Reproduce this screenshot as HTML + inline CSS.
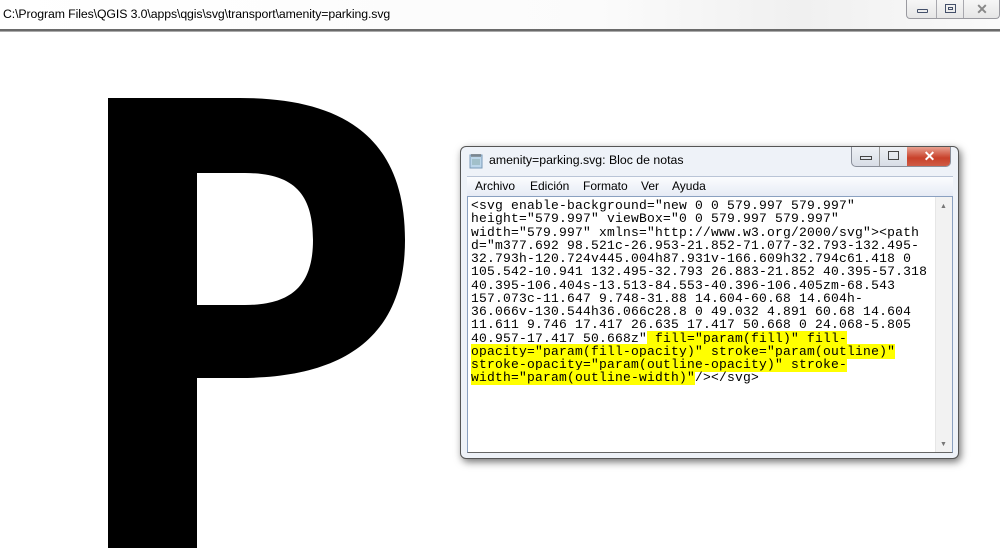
<!DOCTYPE html>
<html><head><meta charset="utf-8">
<style>
*{margin:0;padding:0;box-sizing:border-box}
html,body{width:1000px;height:560px;overflow:hidden;background:#fff;font-family:"Liberation Sans",sans-serif}
.tb{position:absolute;left:0;top:0;width:1000px;height:29px;background:linear-gradient(90deg,#fff 0%,#fbfbfb 60%,#f0f0f0 80%,#fafafa 100%);}
.tb .t{position:absolute;left:3px;top:7px;font-size:12.3px;color:#000;letter-spacing:-0.1px}
.line{position:absolute;left:0;top:29px;width:1000px;height:3px;background:#6a6a6a;border-bottom:1px solid #aaa}
.btns{position:absolute;left:906px;top:0;width:94px;height:19px;border:1px solid #9a9aa0;border-top:none;border-radius:0 0 4px 4px;background:linear-gradient(#f6f6f6,#e6e6e6)}
.btns div{position:absolute;top:0;height:18px;border-right:1px solid #a8a8ae}
.np{position:absolute;left:460px;top:146px;width:499px;height:313px;border:1px solid #555;border-radius:6px;background:#eef2f8;box-shadow:2px 3px 8px rgba(0,0,0,.55)}
.np .tt{position:absolute;left:28px;top:6px;font-size:12.3px;color:#000}
.menu{position:absolute;left:6px;top:29px;width:486px;height:20px;background:linear-gradient(#fbfcfe,#e6ebf5);border-top:1px solid #b9c4d6;font-size:12px}
.menu span{position:absolute;top:2px}
.ta{position:absolute;left:6px;top:49px;width:486px;height:257px;background:#fff;border:1px solid #8aa0c0;border-bottom-color:#666}
.sb{position:absolute;right:0;top:0;width:17px;height:100%;background:#f2f2f2;border-left:1px solid #e6e6e6}
pre{position:absolute;left:3px;top:2px;font-family:"Liberation Mono",monospace;font-size:13px;line-height:13.25px;color:#000;letter-spacing:0.2px}
.h{background:#ffff00}
.nb{position:absolute;left:390px;top:0;width:100px;height:20px}
</style></head><body>
<div class="tb"><div class="t">C:\Program Files\QGIS 3.0\apps\qgis\svg\transport\amenity=parking.svg</div></div>
<div class="line"></div>
<div class="btns">
 <div style="left:0;width:30px"><span style="position:absolute;left:10px;top:9px;width:11px;height:4px;border:1px solid #44506a;border-radius:1px"></span></div>
 <div style="left:30px;width:27px"><span style="position:absolute;left:8px;top:4px;width:11px;height:9px;border:1px solid #44506a"></span><span style="position:absolute;left:11px;top:7px;width:5px;height:3px;border:1px solid #44506a"></span></div>
 <div style="left:57px;width:36px;border:none;text-align:center;font-size:14px;font-weight:bold;color:#888;line-height:18px">✕</div>
</div>
<svg style="position:absolute;left:0;top:0" width="1000" height="560">
<path fill-rule="evenodd" fill="#000" d="M108 98 H240 C340 98 405 135 405 240 C405 340 340 378 240 378 H197 V548 H108 Z M197 173 H245 C295 173 313 195 313 240 C313 285 292 305 245 305 H197 Z"/>
</svg>
<div class="np">
 <svg style="position:absolute;left:8px;top:6px" width="14" height="16"><rect x="1" y="2" width="12" height="13" fill="#bcd6ea" stroke="#7a9ab8"/><path d="M3 1v3M5 1v3M7 1v3M9 1v3M11 1v3" stroke="#555"/><path d="M3 7h8M3 9h8M3 11h8" stroke="#8aa"/></svg>
 <div class="tt">amenity=parking.svg: Bloc de notas</div>
 <div class="nb">
  <div style="position:absolute;left:0;top:0;width:100px;height:20px;border:1px solid #8a8f9a;border-top:none;border-radius:0 0 5px 5px;background:linear-gradient(#eef1f5,#d8dde6);overflow:hidden">
   <div style="position:absolute;left:0;top:0;width:28px;height:20px;border-right:1px solid #999"><span style="position:absolute;left:8px;top:9px;width:12px;height:4px;border:1px solid #444"></span></div>
   <div style="position:absolute;left:28px;top:0;width:27px;height:20px"><span style="position:absolute;left:8px;top:4px;width:11px;height:9px;border:1px solid #444"></span></div>
   <div style="position:absolute;left:55px;top:0;width:45px;height:20px;background:linear-gradient(#e8a090,#c8412a 55%,#d0604a);color:#fff;text-align:center;font-weight:bold;font-size:14px;line-height:19px">✕</div>
  </div>
 </div>
 <div class="menu">
  <span style="left:8px">Archivo</span><span style="left:63px">Edición</span><span style="left:116px">Formato</span><span style="left:174px">Ver</span><span style="left:205px">Ayuda</span>
 </div>
 <div class="ta">
  <div class="sb"><span style="position:absolute;left:4px;top:6px;font-size:7px;color:#777">▲</span><span style="position:absolute;left:4px;bottom:4px;font-size:7px;color:#777">▼</span></div>
<pre>&lt;svg enable-background="new 0 0 579.997 579.997"
height="579.997" viewBox="0 0 579.997 579.997"
width="579.997" xmlns="http://www.w3.org/2000/svg"&gt;&lt;path
d="m377.692 98.521c-26.953-21.852-71.077-32.793-132.495-
32.793h-120.724v445.004h87.931v-166.609h32.794c61.418 0
105.542-10.941 132.495-32.793 26.883-21.852 40.395-57.318
40.395-106.404s-13.513-84.553-40.396-106.405zm-68.543
157.073c-11.647 9.748-31.88 14.604-60.68 14.604h-
36.066v-130.544h36.066c28.8 0 49.032 4.891 60.68 14.604
11.611 9.746 17.417 26.635 17.417 50.668 0 24.068-5.805
40.957-17.417 50.668z"<span class="h"> fill="param(fill)" fill-</span>
<span class="h">opacity="param(fill-opacity)" stroke="param(outline)"</span>
<span class="h">stroke-opacity="param(outline-opacity)" stroke-</span>
<span class="h">width="param(outline-width)"</span>/&gt;&lt;/svg&gt;</pre>
 </div>
</div>
</body></html>
